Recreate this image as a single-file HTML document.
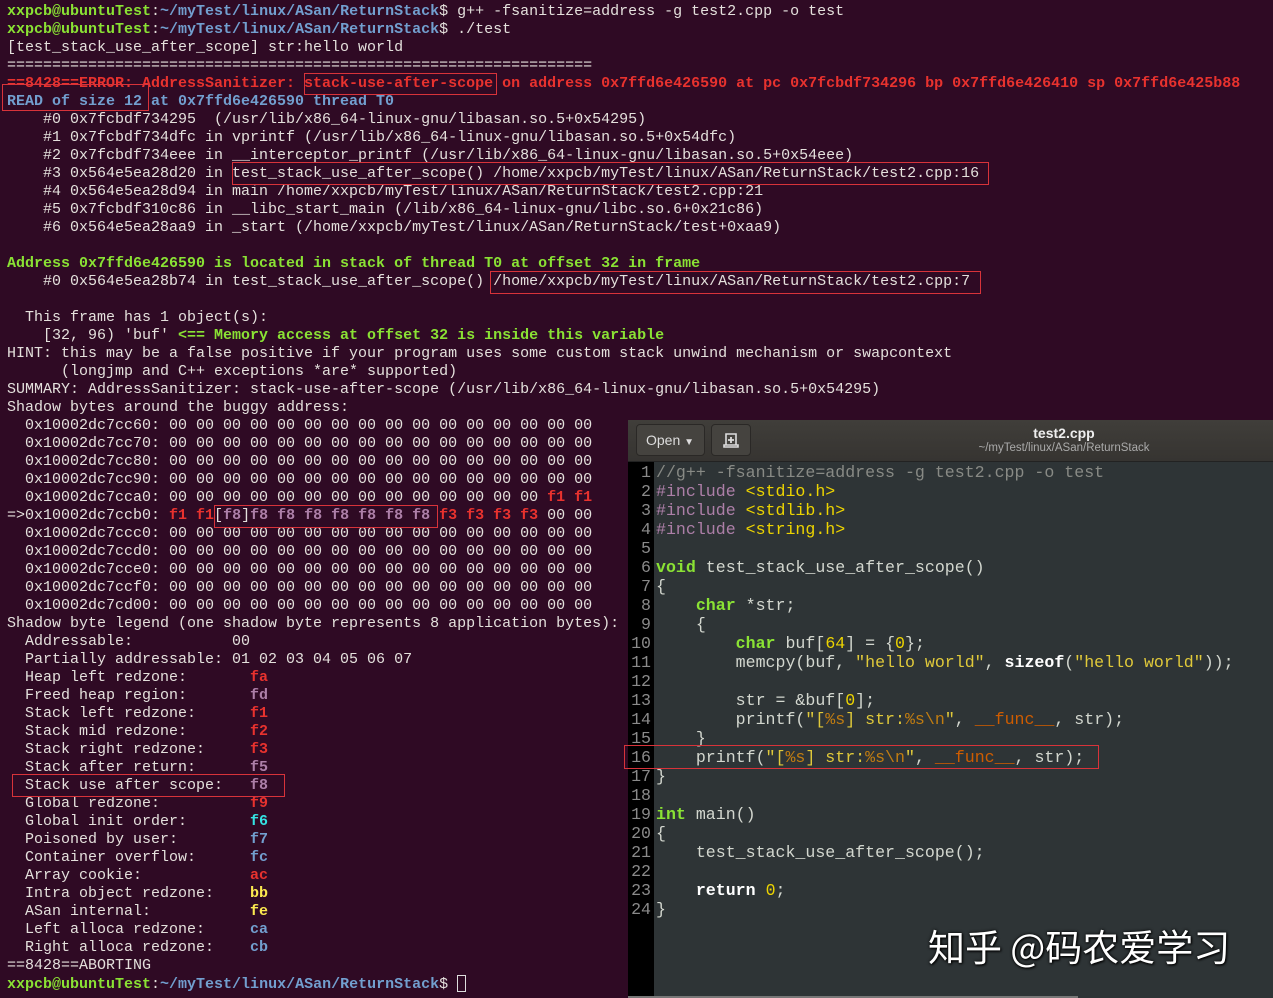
<!DOCTYPE html>
<html><head><meta charset="utf-8"><style>
html,body{margin:0;padding:0}
body{width:1273px;height:998px;overflow:hidden;background:#2f0a24;position:relative;font-family:"Liberation Mono",monospace}
#term{position:absolute;left:7px;top:3px;margin:0;font-size:15px;line-height:18px;color:#e4e0dc;white-space:pre;font-family:"Liberation Mono",monospace}
.g{color:#8ae234;font-weight:bold}.b{color:#729fcf;font-weight:bold}.r{color:#e8322e;font-weight:bold}
.p{color:#ad7fa8;font-weight:bold}.c{color:#34e2e2;font-weight:bold}.y{color:#fce94f;font-weight:bold}
.box{position:absolute;border:1px solid #d8333a;box-sizing:border-box}
#ed{position:absolute;left:628px;top:420px;width:645px;height:578px;background:#2e3436}
#hdr{position:absolute;left:0;top:0;width:645px;height:41px;background:linear-gradient(#403e3a,#363431);border-bottom:1px solid #222}
.btn{position:absolute;top:4px;height:32px;background:#45433f;border:1px solid #2a2826;border-radius:4px;box-sizing:border-box;color:#ddd;font-family:"Liberation Sans",sans-serif;font-size:14px;line-height:30px}
#gut{position:absolute;left:0;top:42px;width:26px;height:536px;background:#000}
#code{position:absolute;left:0;top:43px;margin:0;font-size:16.6px;line-height:19px;color:#d3d7cf;white-space:pre;font-family:"Liberation Mono",monospace}
.n{display:inline-block;width:23px;text-align:right;color:#8a8a8a;margin-right:5px}
.cm{color:#888a85}.pp{color:#ad7fa8}.in{color:#edd400}.kw{color:#8ae234;font-weight:bold}.st{color:#e0c93a}.fm{color:#c17d11}.fn{color:#ce5c00}.wb{color:#fff;font-weight:bold}
#wm{position:absolute;left:928px;top:922px;font-family:"Noto Sans CJK SC",sans-serif;font-size:37px;color:#fff;text-shadow:1px 1px 2px #000,0 0 3px #000;line-height:46px}
</style></head><body>
<pre id="term"><span class="g">xxpcb@ubuntuTest</span>:<span class="b">~/myTest/linux/ASan/ReturnStack</span>$ g++ -fsanitize=address -g test2.cpp -o test
<span class="g">xxpcb@ubuntuTest</span>:<span class="b">~/myTest/linux/ASan/ReturnStack</span>$ ./test
[test_stack_use_after_scope] str:hello world
=================================================================
<span class="r">==8428==ERROR: AddressSanitizer: stack-use-after-scope on address 0x7ffd6e426590 at pc 0x7fcbdf734296 bp 0x7ffd6e426410 sp 0x7ffd6e425b88</span>
<span class="b">READ of size 12 at 0x7ffd6e426590 thread T0</span>
    #0 0x7fcbdf734295  (/usr/lib/x86_64-linux-gnu/libasan.so.5+0x54295)
    #1 0x7fcbdf734dfc in vprintf (/usr/lib/x86_64-linux-gnu/libasan.so.5+0x54dfc)
    #2 0x7fcbdf734eee in __interceptor_printf (/usr/lib/x86_64-linux-gnu/libasan.so.5+0x54eee)
    #3 0x564e5ea28d20 in test_stack_use_after_scope() /home/xxpcb/myTest/linux/ASan/ReturnStack/test2.cpp:16
    #4 0x564e5ea28d94 in main /home/xxpcb/myTest/linux/ASan/ReturnStack/test2.cpp:21
    #5 0x7fcbdf310c86 in __libc_start_main (/lib/x86_64-linux-gnu/libc.so.6+0x21c86)
    #6 0x564e5ea28aa9 in _start (/home/xxpcb/myTest/linux/ASan/ReturnStack/test+0xaa9)

<span class="g">Address 0x7ffd6e426590 is located in stack of thread T0 at offset 32 in frame</span>
    #0 0x564e5ea28b74 in test_stack_use_after_scope() /home/xxpcb/myTest/linux/ASan/ReturnStack/test2.cpp:7

  This frame has 1 object(s):
    [32, 96) 'buf' <span class="g">&lt;== Memory access at offset 32 is inside this variable</span>
HINT: this may be a false positive if your program uses some custom stack unwind mechanism or swapcontext
      (longjmp and C++ exceptions *are* supported)
SUMMARY: AddressSanitizer: stack-use-after-scope (/usr/lib/x86_64-linux-gnu/libasan.so.5+0x54295)
Shadow bytes around the buggy address:
  0x10002dc7cc60: 00 00 00 00 00 00 00 00 00 00 00 00 00 00 00 00
  0x10002dc7cc70: 00 00 00 00 00 00 00 00 00 00 00 00 00 00 00 00
  0x10002dc7cc80: 00 00 00 00 00 00 00 00 00 00 00 00 00 00 00 00
  0x10002dc7cc90: 00 00 00 00 00 00 00 00 00 00 00 00 00 00 00 00
  0x10002dc7cca0: 00 00 00 00 00 00 00 00 00 00 00 00 00 00 <span class="r">f1 f1</span>
=&gt;0x10002dc7ccb0: <span class="r">f1 f1</span>[<span class="p">f8</span>]<span class="p">f8 f8 f8 f8 f8 f8 f8</span> <span class="r">f3 f3 f3 f3</span> 00 00
  0x10002dc7ccc0: 00 00 00 00 00 00 00 00 00 00 00 00 00 00 00 00
  0x10002dc7ccd0: 00 00 00 00 00 00 00 00 00 00 00 00 00 00 00 00
  0x10002dc7cce0: 00 00 00 00 00 00 00 00 00 00 00 00 00 00 00 00
  0x10002dc7ccf0: 00 00 00 00 00 00 00 00 00 00 00 00 00 00 00 00
  0x10002dc7cd00: 00 00 00 00 00 00 00 00 00 00 00 00 00 00 00 00
Shadow byte legend (one shadow byte represents 8 application bytes):
  Addressable:           00
  Partially addressable: 01 02 03 04 05 06 07
  Heap left redzone:       <span class="r">fa</span>
  Freed heap region:       <span class="p">fd</span>
  Stack left redzone:      <span class="r">f1</span>
  Stack mid redzone:       <span class="r">f2</span>
  Stack right redzone:     <span class="r">f3</span>
  Stack after return:      <span class="p">f5</span>
  Stack use after scope:   <span class="p">f8</span>
  Global redzone:          <span class="r">f9</span>
  Global init order:       <span class="c">f6</span>
  Poisoned by user:        <span class="b">f7</span>
  Container overflow:      <span class="b">fc</span>
  Array cookie:            <span class="r">ac</span>
  Intra object redzone:    <span class="y">bb</span>
  ASan internal:           <span class="y">fe</span>
  Left alloca redzone:     <span class="b">ca</span>
  Right alloca redzone:    <span class="b">cb</span>
==8428==ABORTING
<span class="g">xxpcb@ubuntuTest</span>:<span class="b">~/myTest/linux/ASan/ReturnStack</span>$ <span style="display:inline-block;width:9px;height:17px;border:1px solid #ddd;box-sizing:border-box;vertical-align:-4px"></span></pre>

<div class="box" style="left:304px;top:73px;width:193px;height:22px"></div>
<div class="box" style="left:2px;top:84px;width:147px;height:27px"></div>
<div class="box" style="left:232px;top:162px;width:757px;height:23px"></div>
<div class="box" style="left:490px;top:271px;width:491px;height:23px"></div>
<div class="box" style="left:214px;top:505px;width:224px;height:23px"></div>
<div class="box" style="left:12px;top:774px;width:273px;height:23px"></div>

<div id="ed">
  <div id="hdr">
    <div class="btn" style="left:8px;width:69px;padding-left:9px">Open <span style="font-size:10px">▼</span></div>
    <div class="btn" style="left:83px;width:40px;text-align:center">
      <svg width="16" height="16" viewBox="0 0 16 16" style="vertical-align:-3px"><path d="M3 2h10v11H3z M1 13h14v2H1z" fill="none" stroke="#ddd" stroke-width="1.6"/><path d="M8 5v6M5 8h6" stroke="#ddd" stroke-width="1.8"/></svg>
    </div>
    <div style="position:absolute;left:0;width:872px;top:5px;text-align:center;font-family:'Liberation Sans',sans-serif;font-size:14px;font-weight:bold;color:#eee">test2.cpp</div>
    <div style="position:absolute;left:0;width:872px;top:22px;text-align:center;font-family:'Liberation Sans',sans-serif;font-size:11.5px;color:#aaa">~/myTest/linux/ASan/ReturnStack</div>
  </div>
  <div id="gut"></div>
<pre id="code"><span class="n">1</span><span class="cm">//g++ -fsanitize=address -g test2.cpp -o test</span>
<span class="n">2</span><span class="pp">#include</span> <span class="in">&lt;stdio.h&gt;</span>
<span class="n">3</span><span class="pp">#include</span> <span class="in">&lt;stdlib.h&gt;</span>
<span class="n">4</span><span class="pp">#include</span> <span class="in">&lt;string.h&gt;</span>
<span class="n">5</span>
<span class="n">6</span><span class="kw">void</span> test_stack_use_after_scope()
<span class="n">7</span>{
<span class="n">8</span>    <span class="kw">char</span> *str;
<span class="n">9</span>    {
<span class="n">10</span>        <span class="kw">char</span> buf[<span class="in">64</span>] = {<span class="in">0</span>};
<span class="n">11</span>        memcpy(buf, <span class="st">"hello world"</span>, <span class="wb">sizeof</span>(<span class="st">"hello world"</span>));
<span class="n">12</span>
<span class="n">13</span>        str = &amp;buf[<span class="in">0</span>];
<span class="n">14</span>        printf(<span class="st">"[<span class="fm">%s</span>] str:<span class="fm">%s\n</span>"</span>, <span class="fn">__func__</span>, str);
<span class="n">15</span>    }
<span class="n">16</span>    printf(<span class="st">"[<span class="fm">%s</span>] str:<span class="fm">%s\n</span>"</span>, <span class="fn">__func__</span>, str);
<span class="n">17</span>}
<span class="n">18</span>
<span class="n">19</span><span class="kw">int</span> main()
<span class="n">20</span>{
<span class="n">21</span>    test_stack_use_after_scope();
<span class="n">22</span>
<span class="n">23</span>    <span class="wb">return</span> <span class="in">0</span>;
<span class="n">24</span>}</pre>
  <div style="position:absolute;left:0;top:576px;width:450px;height:2px;background:#777"></div>
</div>
<div class="box" style="left:624px;top:745px;width:475px;height:24px"></div>
<div id="wm">知乎 @码农爱学习</div>
</body></html>
